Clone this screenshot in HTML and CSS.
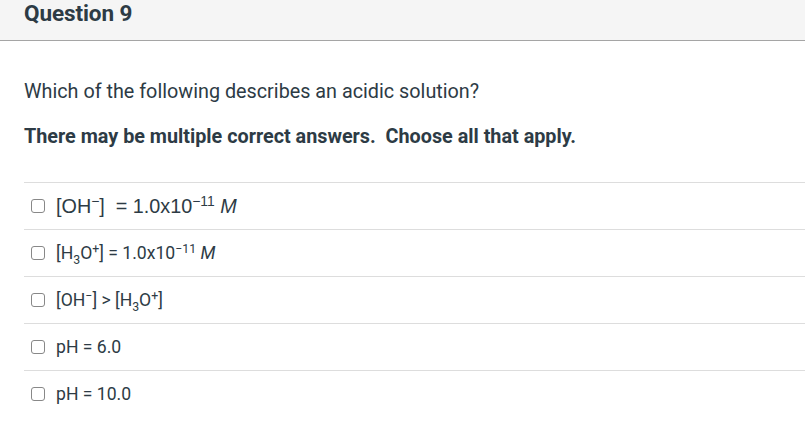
FILE: index.html
```html
<!DOCTYPE html>
<html>
<head>
<meta charset="utf-8">
<link rel="stylesheet" href="styles.css">
</head>
<body>
<div class="header"><h2 class="title">Question 9</h2></div>
<div class="content">
  <p class="q">Which of the following describes an acidic solution?</p>
  <p class="note">There may be multiple correct answers.&nbsp; Choose all that apply.</p>
  <div class="answers">
    <div class="row"><span class="box"></span><span class="a1">[OH<sup>−</sup>]&nbsp; = 1.0x10<sup>−11</sup> <i>M</i></span></div>
    <div class="row"><span class="box"></span><span class="a">[H<sub>3</sub>O<sup>+</sup>] = 1.0x10<sup>−11</sup> <i>M</i></span></div>
    <div class="row"><span class="box"></span><span class="a">[OH<sup>−</sup>] &gt; [H<sub>3</sub>O<sup>+</sup>]</span></div>
    <div class="row"><span class="box"></span><span class="a">pH = 6.0</span></div>
    <div class="row"><span class="box"></span><span class="a">pH = 10.0</span></div>
  </div>
</div>
</body>
</html>
```
FILE: styles.css
```css
html, body { margin: 0; padding: 0; background: #fff; }
body { font-family: Roboto, "Liberation Sans", sans-serif; color: #2d3b45; }
.header { height: 40px; background: #f5f5f5; border-bottom: 1px solid #a5a5a5; padding-left: 24px; }
.title { margin: 0; font-size: 22.5px; font-weight: 700; line-height: 27px; letter-spacing: -0.1px; }
.content { padding: 0 0 0 24px; }
.q { margin: 37px 0 0; font-size: 19.8px; line-height: 28px; }
.note { margin: 17px 0 0; font-size: 19.8px; font-weight: 700; line-height: 28px; }
.answers { margin-top: 31px; border-top: 1px solid #ddd; }
.row { height: 46px; border-bottom: 1px solid #ddd; display: flex; align-items: center; padding-left: 7px; }
.row:last-child { border-bottom: none; }
.box { width: 12px; height: 12px; border: 1px solid #888; border-radius: 3px; margin-right: 11px; flex: none; }
.a { font-size: 17.6px; }
.a1 { font-family: "Liberation Sans", Arial, sans-serif; font-size: 19.8px; }
sup, sub { font-size: 70%; line-height: 0; }
sup { vertical-align: 0.5em; }
```
